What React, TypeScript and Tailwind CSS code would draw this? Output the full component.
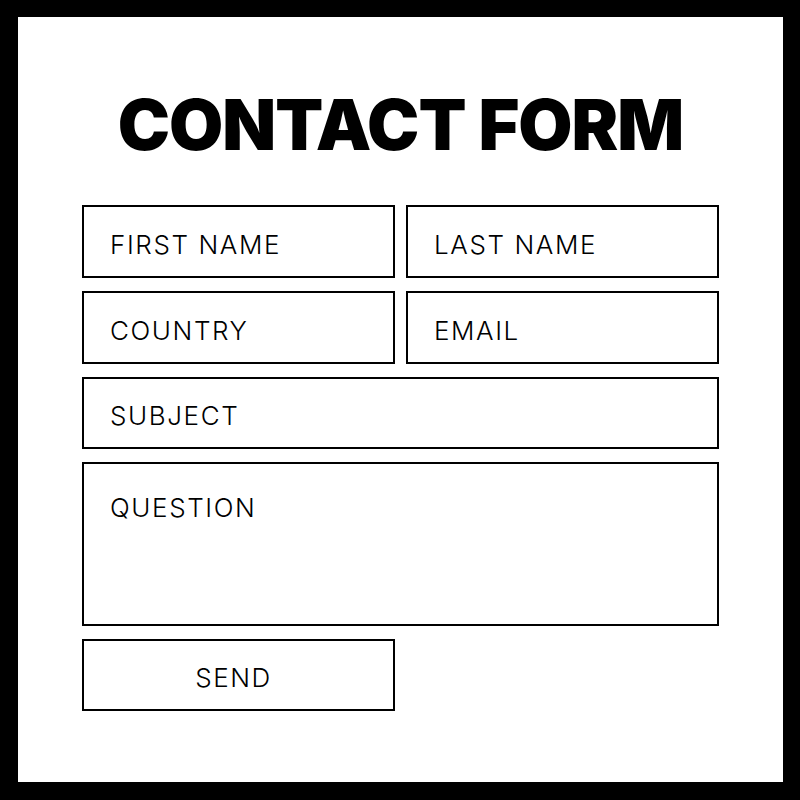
import React from "react";

const labelFont = { fontFamily: "Inter, 'Noto Sans', sans-serif" };

function Field({ label, className = "" }: { label: string; className?: string }) {
  return (
    <div
      className={`border-2 border-black flex items-center pl-[26px] pt-[6px] text-[26px] leading-none font-[260] tracking-[1.6px] text-black ${className}`}
      style={labelFont}
    >
      {label}
    </div>
  );
}

export default function App() {
  return (
    <div className="w-[800px] h-[800px] bg-black pt-[17px] pl-[18px] pr-[17px] pb-[18px]">
      <div className="w-full h-full bg-white flex flex-col px-[64px]">
        <h1
          className="h-[188px] pt-[27px] flex items-center justify-center text-[70px] leading-none font-black text-black tracking-[-1px]"
          style={{ fontFamily: "Inter, 'Noto Sans', sans-serif" }}
        >
          CONTACT FORM
        </h1>
        <div className="flex flex-col gap-[13px]">
          <div className="grid grid-cols-2 gap-[11px]">
            <Field label="FIRST NAME" className="h-[73px]" />
            <Field label="LAST NAME" className="h-[73px]" />
          </div>
          <div className="grid grid-cols-2 gap-[11px]">
            <Field label="COUNTRY" className="h-[73px]" />
            <Field label="EMAIL" className="h-[73px]" />
          </div>
          <Field label="SUBJECT" className="h-[72px]" />
          <div
            className="h-[164px] border-2 border-black pl-[26px] pt-[31px] text-[26px] leading-none font-[260] tracking-[1.6px] text-black"
            style={labelFont}
          >
            QUESTION
          </div>
          <div className="grid grid-cols-2 gap-[11px]">
            <button
              type="button"
              className="h-[72px] border-2 border-black flex items-center justify-center pt-[6px] pr-[10px] text-[26px] leading-none font-[260] tracking-[1.6px] text-black"
              style={labelFont}
            >
              SEND
            </button>
            <div />
          </div>
        </div>
      </div>
    </div>
  );
}
